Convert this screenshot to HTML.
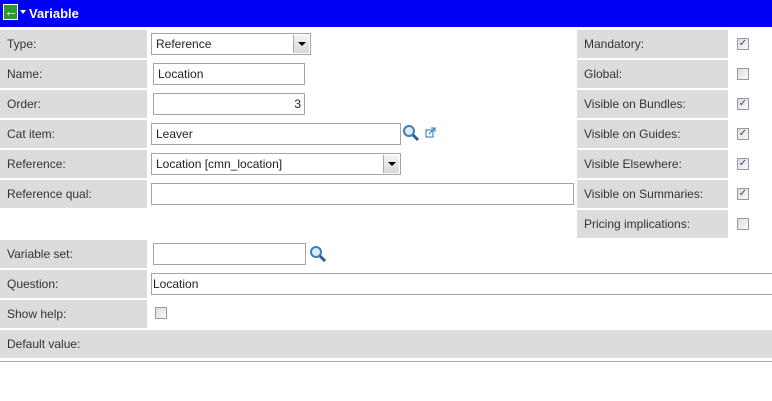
<!DOCTYPE html>
<html><head><style>
body{margin:0;width:772px;height:401px;background:#fff;font-family:"Liberation Sans",Arial,sans-serif;font-size:12px;color:#222;position:relative;overflow:hidden}
.a{position:absolute}
.hd{left:0;top:0;width:772px;height:27px;background:#0000f5}
.lb{background:#dcdcdc;height:28px;line-height:28px;padding-left:7px;box-sizing:border-box;color:#333}
.in{background:#fff;border:1px solid #a5a5a5;height:22px;box-sizing:border-box;line-height:20px;padding-left:4px;font-size:12px}
.cb{width:12px;height:12px;border:1px solid #9a9a9a;background:linear-gradient(135deg,#dcdcdc,#fafafa);box-sizing:border-box;font-size:10px;line-height:10px;text-align:center;color:#33448a}
.dd{position:absolute;right:1px;top:1px;width:16px;height:18px;background:linear-gradient(#f4f4f4,#d8d8d8);border-left:1px solid #aaa;box-sizing:border-box}
.dd:after{content:"";position:absolute;left:4px;top:7px;border:4px solid transparent;border-top:4px solid #000}
</style></head><body>
<div class="a hd"></div>
<div class="a" style="left:3px;top:4px;width:15px;height:16px;background:#2d9a2d;border:1px solid #fff;box-sizing:border-box;color:#fff;font-size:14px;line-height:13px;text-align:center;font-weight:bold">&#8592;</div>
<div class="a" style="left:20px;top:10px;border:3px solid transparent;border-top:4px solid #fff"></div>
<div class="a" style="left:29px;top:6px;color:#fff;font-weight:bold;font-size:13px">Variable</div>

<div class="a lb" style="left:0;top:30px;width:147px">Type:</div>
<div class="a in" style="left:151px;top:33px;width:160px">Reference<div class="dd"></div></div>
<div class="a lb" style="left:0;top:60px;width:147px">Name:</div>
<div class="a in" style="left:153px;top:63px;width:152px">Location</div>
<div class="a lb" style="left:0;top:90px;width:147px">Order:</div>
<div class="a in" style="left:153px;top:93px;width:152px;text-align:right;padding-right:3px">3</div>
<div class="a lb" style="left:0;top:120px;width:147px">Cat item:</div>
<div class="a in" style="left:151px;top:123px;width:250px">Leaver</div>
<svg class="a" style="left:402px;top:124px" width="18" height="18"><circle cx="7" cy="7" r="5" fill="#d8ecfa" stroke="#3a7fb8" stroke-width="2"/><line x1="11" y1="11" x2="16" y2="16" stroke="#2d5f8f" stroke-width="3"/></svg>
<svg class="a" style="left:425px;top:127px" width="11" height="11"><rect x="1" y="3" width="7" height="7" fill="none" stroke="#2a6fb8"/><path d="M4 7L10 1M6 1h4v4" fill="none" stroke="#2a6fb8"/></svg>
<div class="a lb" style="left:0;top:150px;width:147px">Reference:</div>
<div class="a in" style="left:151px;top:153px;width:250px">Location [cmn_location]<div class="dd"></div></div>
<div class="a lb" style="left:0;top:180px;width:147px">Reference qual:</div>
<div class="a in" style="left:151px;top:183px;width:423px"></div>
<div class="a lb" style="left:0;top:240px;width:147px">Variable set:</div>
<div class="a in" style="left:153px;top:243px;width:153px"></div>
<svg class="a" style="left:309px;top:245px" width="18" height="18"><circle cx="7" cy="7" r="5" fill="#d8ecfa" stroke="#3a7fb8" stroke-width="2"/><line x1="11" y1="11" x2="16" y2="16" stroke="#2d5f8f" stroke-width="3"/></svg>
<div class="a lb" style="left:0;top:270px;width:147px">Question:</div>
<div class="a in" style="left:151px;top:273px;width:625px;padding-left:1px">Location</div>
<div class="a lb" style="left:0;top:300px;width:147px">Show help:</div>
<div class="a cb" style="left:155px;top:307px"></div>
<div class="a lb" style="left:0;top:330px;width:772px">Default value:</div>
<div class="a" style="left:0;top:361px;width:772px;height:1px;background:#aaa"></div>

<div class="a lb" style="left:577px;top:30px;width:151px">Mandatory:</div>
<div class="a cb" style="left:737px;top:38px">&#10003;</div>
<div class="a lb" style="left:577px;top:60px;width:151px">Global:</div>
<div class="a cb" style="left:737px;top:68px"></div>
<div class="a lb" style="left:577px;top:90px;width:151px">Visible on Bundles:</div>
<div class="a cb" style="left:737px;top:98px">&#10003;</div>
<div class="a lb" style="left:577px;top:120px;width:151px">Visible on Guides:</div>
<div class="a cb" style="left:737px;top:128px">&#10003;</div>
<div class="a lb" style="left:577px;top:150px;width:151px">Visible Elsewhere:</div>
<div class="a cb" style="left:737px;top:158px">&#10003;</div>
<div class="a lb" style="left:577px;top:180px;width:151px">Visible on Summaries:</div>
<div class="a cb" style="left:737px;top:188px">&#10003;</div>
<div class="a lb" style="left:577px;top:210px;width:151px">Pricing implications:</div>
<div class="a cb" style="left:737px;top:218px"></div>
</body></html>
